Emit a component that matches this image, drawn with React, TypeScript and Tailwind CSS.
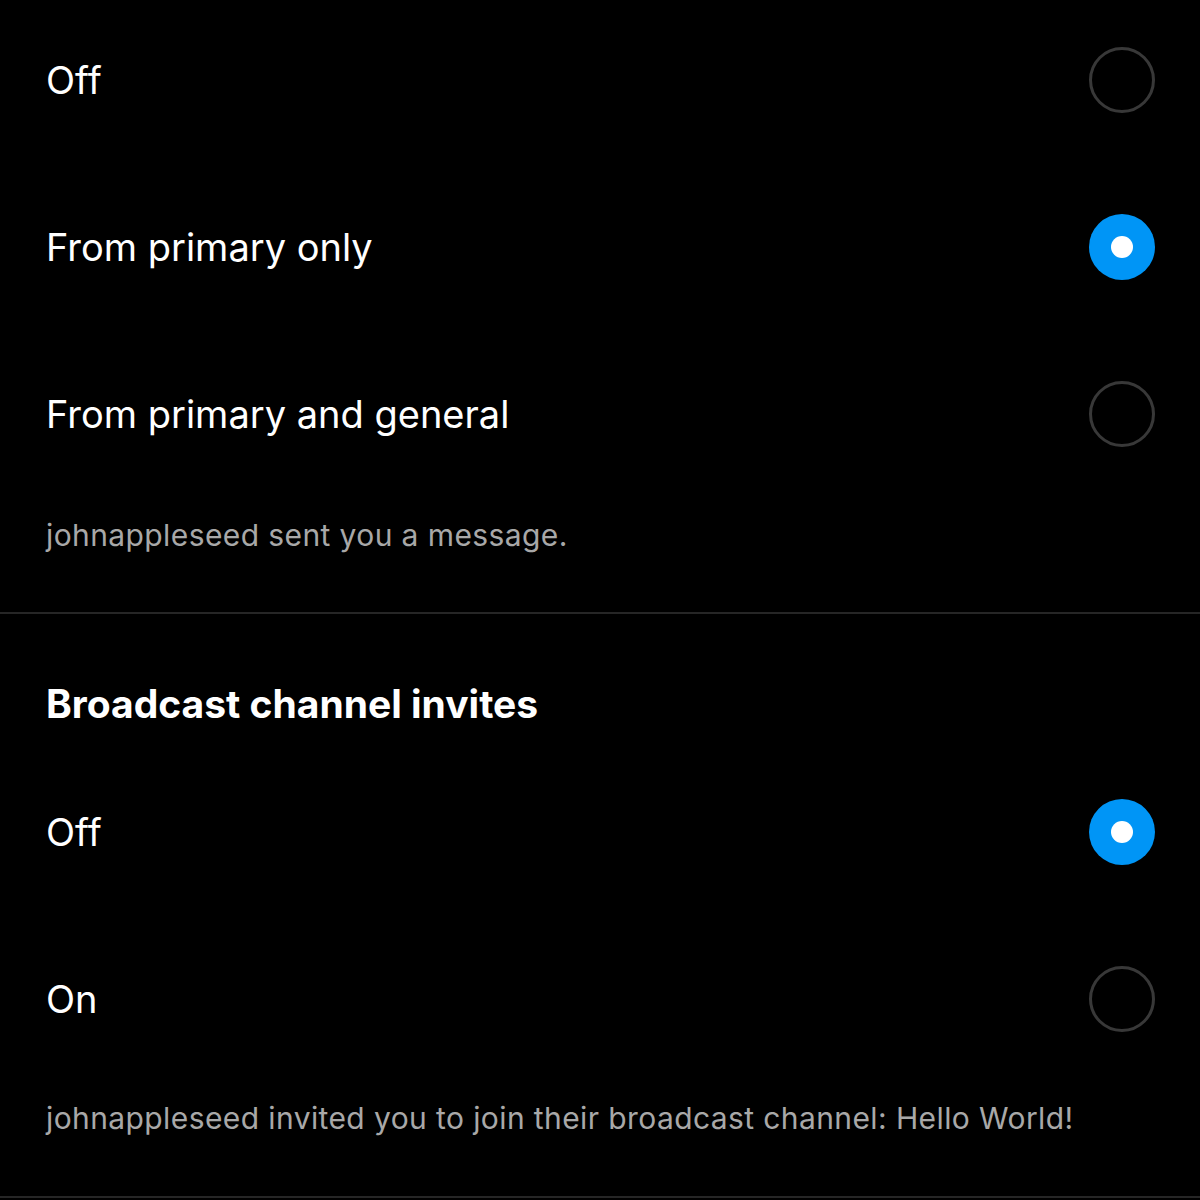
import React from "react";

type Option = { label: string; selected: boolean };

const messageOptions: Option[] = [
  { label: "Off", selected: false },
  { label: "From primary only", selected: true },
  { label: "From primary and general", selected: false },
];

const inviteOptions: Option[] = [
  { label: "Off", selected: true },
  { label: "On", selected: false },
];

function Radio({ selected }: { selected: boolean }) {
  if (selected) {
    return (
      <div className="w-[66px] h-[66px] rounded-full bg-[#0095f6] flex items-center justify-center shrink-0">
        <div className="w-[22px] h-[22px] rounded-full bg-white" />
      </div>
    );
  }
  return <div className="w-[66px] h-[66px] rounded-full border-[3px] border-[#383838] shrink-0" />;
}

function Row({ option }: { option: Option }) {
  return (
    <div className="h-[167px] flex items-center justify-between pl-[46px] pr-[45px]">
      <span className="text-[38px] text-white leading-none">{option.label}</span>
      <Radio selected={option.selected} />
    </div>
  );
}

export default function App() {
  return (
    <div
      className="w-[1200px] h-[1200px] bg-black overflow-hidden"
      style={{ fontFamily: "Inter, Roboto, 'Noto Sans', sans-serif" }}
    >
      {/* Messages */}
      <div className="-mt-[4px]">
        {messageOptions.map((o) => (
          <Row key={o.label} option={o} />
        ))}
      </div>
      <p className="pl-[46px] pt-[18px] pb-[57px] text-[30px] tracking-[0.4px] leading-[40px] text-[#a8a8a8]">
        johnappleseed sent you a message.
      </p>
      <div className="h-[2px] bg-[#262626]" />

      {/* Broadcast channel invites */}
      <h2 className="pl-[46px] pt-[66px] text-[39px] leading-[48px] font-bold text-white">
        Broadcast channel invites
      </h2>
      <div className="mt-[20px]">
        {inviteOptions.map((o) => (
          <Row key={o.label} option={o} />
        ))}
      </div>
      <p className="pl-[46px] pt-[16px] pb-[58px] text-[30px] tracking-[0.4px] leading-[40px] text-[#a8a8a8]">
        johnappleseed invited you to join their broadcast channel: Hello World!
      </p>
      <div className="h-[2px] bg-[#262626]" />
    </div>
  );
}
